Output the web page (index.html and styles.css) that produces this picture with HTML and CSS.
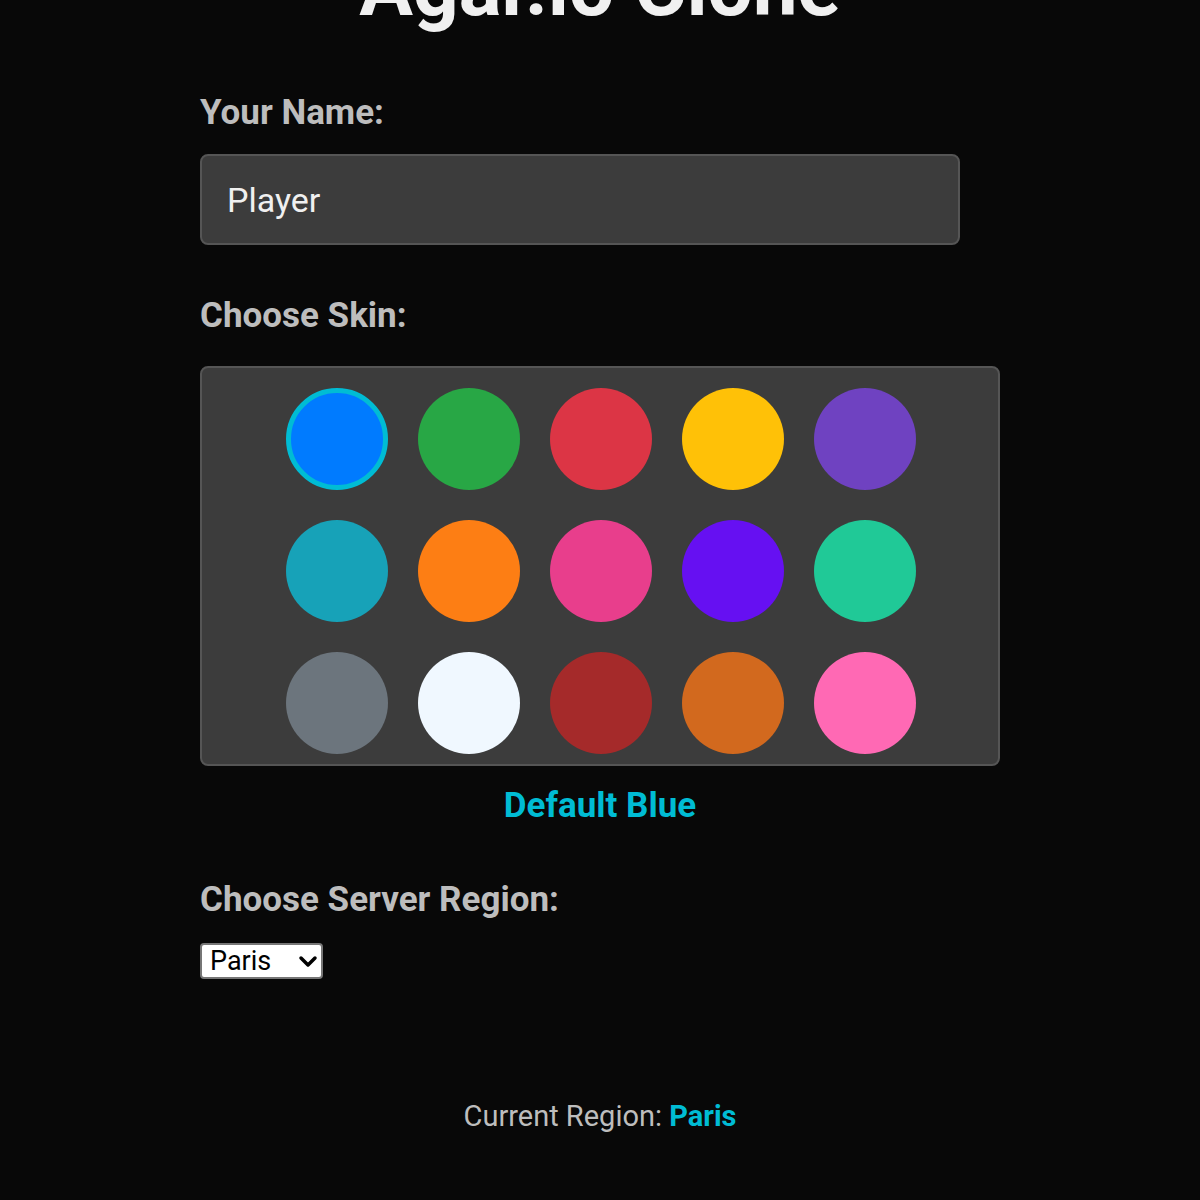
FILE: index.html
```html
<!DOCTYPE html>
<html lang="en">
<head>
    <meta charset="UTF-8">
    <meta name="viewport" content="width=device-width, initial-scale=1.0">
    <title>Agar.io Clone</title>
    <link rel="stylesheet" href="styles.css">
</head>
<body>
    <div id="menu">
        <h1 id="title">Agar.io Clone</h1>

        <label class="field-label" for="player-name">Your Name:</label>
        <input id="player-name" type="text" value="Player">

        <div class="field-label skin-label">Choose Skin:</div>
        <div id="skin-grid">
            <div class="skin selected" style="background: #007bff"></div>
            <div class="skin" style="background: #28a745"></div>
            <div class="skin" style="background: #dc3545"></div>
            <div class="skin" style="background: #ffc107"></div>
            <div class="skin" style="background: #6f42c1"></div>
            <div class="skin" style="background: #17a2b8"></div>
            <div class="skin" style="background: #fd7e14"></div>
            <div class="skin" style="background: #e83e8c"></div>
            <div class="skin" style="background: #6610f2"></div>
            <div class="skin" style="background: #20c997"></div>
            <div class="skin" style="background: #6c757d"></div>
            <div class="skin" style="background: #f0f8ff"></div>
            <div class="skin" style="background: #a52a2a"></div>
            <div class="skin" style="background: #d2691e"></div>
            <div class="skin" style="background: #ff69b4"></div>
        </div>
        <div id="skin-name">Default Blue</div>

        <label class="field-label region-label" for="region">Choose Server Region:</label>
        <div class="select-wrap">
            <select id="region">
                <option>Paris</option>
                <option>London</option>
                <option>Tokyo</option>
            </select>
            <svg class="select-arrow" width="20" height="14" viewBox="0 0 20 14">
                <path d="M3 3 L10 10 L17 3" fill="none" stroke="#000" stroke-width="3.5" stroke-linecap="round" stroke-linejoin="round"/>
            </svg>
        </div>

        <div id="current-region">Current Region: <span>Paris</span></div>
    </div>
</body>
</html>
```

FILE: styles.css
```css
body {
    font-family: Roboto, "Liberation Sans", sans-serif;
    display: flex;
    justify-content: center;
    align-items: center;
    height: 100vh;
    margin: 0;
    background-color: #080808;
    color: #bdbdbd;
}

#menu {
    width: 800px;
    display: flex;
    flex-direction: column;
    padding-bottom: 128px;
}

#title {
    margin: 0 0 57px;
    font-size: 80px;
    line-height: 96px;
    font-weight: 700;
    text-align: center;
    color: #f0f0f0;
}

.field-label {
    display: block;
    font-size: 35px;
    line-height: 40px;
    font-weight: 700;
    color: #bdbdbd;
    margin-bottom: 21px;
}

#player-name {
    box-sizing: border-box;
    width: 760px;
    height: 91px;
    margin: 0 0 51px;
    padding: 0 25px;
    font-family: Roboto, "Liberation Sans", sans-serif;
    font-size: 34px;
    color: #f0f0f0;
    background-color: #3c3c3c;
    border: 2px solid #555;
    border-radius: 8px;
    outline: none;
}

.skin-label {
    margin-bottom: 30px;
}

#skin-grid {
    box-sizing: border-box;
    height: 400px;
    display: grid;
    grid-template-columns: repeat(5, 102px);
    grid-auto-rows: 102px;
    gap: 30px;
    justify-content: center;
    padding: 20px 0 10px 2px;
    background-color: #3c3c3c;
    border: 2px solid #555;
    border-radius: 8px;
}

.skin {
    box-sizing: border-box;
    border-radius: 50%;
    cursor: pointer;
}

.skin.selected {
    border: 5px solid #00bcd4;
}

#skin-name {
    margin: 20px 0 54px;
    font-size: 35px;
    line-height: 40px;
    font-weight: 700;
    text-align: center;
    color: #00bcd4;
}

.region-label {
    margin-bottom: 23px;
}

.select-wrap {
    position: relative;
    width: 123px;
    height: 36px;
    margin-bottom: 121px;
}

#region {
    appearance: none;
    box-sizing: border-box;
    width: 123px;
    height: 36px;
    margin: 0;
    padding: 0 0 0 8px;
    font-family: Roboto, "Liberation Sans", sans-serif;
    font-size: 27px;
    color: #000;
    background-color: #fff;
    border: 2px solid #767676;
    border-radius: 4px;
}

.select-arrow {
    position: absolute;
    right: 5px;
    top: 12px;
    pointer-events: none;
}

#current-region {
    font-size: 29px;
    line-height: 32px;
    text-align: center;
    color: #bdbdbd;
}

#current-region span {
    font-weight: 700;
    color: #00bcd4;
}
```
